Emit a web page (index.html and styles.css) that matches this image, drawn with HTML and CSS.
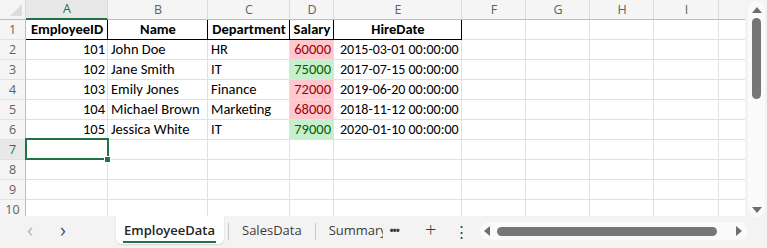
FILE: index.html
```html
<!DOCTYPE html>
<html lang="en">
<head>
  <meta charset="UTF-8" />
  <meta name="viewport" content="width=device-width, initial-scale=1.0" />
  <title>EmployeeData</title>
  <link rel="stylesheet" href="styles.css">
</head>
<body>

  <!-- Sheet area with grid and vertical scrollbar -->
  <div class="workbook">
    <div class="sheet-row">
      <div class="sheet">
        <table class="grid">
          <colgroup>
            <col style="width:26px">
            <col style="width:82px">
            <col style="width:100px">
            <col style="width:82px">
            <col style="width:44px">
            <col style="width:128px">
            <col style="width:64px">
            <col style="width:64px">
            <col style="width:64px">
            <col style="width:65px">
            <col style="width:27px">
          </colgroup>
          <tr class="col-heads">
            <th class="corner"><span class="corner-tri"></span></th>
            <th class="sel-col">A</th>
            <th>B</th>
            <th>C</th>
            <th>D</th>
            <th>E</th>
            <th>F</th>
            <th>G</th>
            <th>H</th>
            <th>I</th>
            <th></th>
          </tr>
          <tr class="head-row">
            <th class="row-head">1</th>
            <td class="hd">EmployeeID</td>
            <td class="hd">Name</td>
            <td class="hd">Department</td>
            <td class="hd">Salary</td>
            <td class="hd">HireDate</td>
            <td></td><td></td><td></td><td></td><td></td>
          </tr>
          <tr>
            <th class="row-head">2</th>
            <td class="num">101</td>
            <td>John Doe</td>
            <td>HR</td>
            <td class="num bad">60000</td>
            <td class="date">2015-03-01 00:00:00</td>
            <td></td><td></td><td></td><td></td><td></td>
          </tr>
          <tr>
            <th class="row-head">3</th>
            <td class="num">102</td>
            <td>Jane Smith</td>
            <td>IT</td>
            <td class="num good">75000</td>
            <td class="date">2017-07-15 00:00:00</td>
            <td></td><td></td><td></td><td></td><td></td>
          </tr>
          <tr>
            <th class="row-head">4</th>
            <td class="num">103</td>
            <td>Emily Jones</td>
            <td>Finance</td>
            <td class="num bad">72000</td>
            <td class="date">2019-06-20 00:00:00</td>
            <td></td><td></td><td></td><td></td><td></td>
          </tr>
          <tr>
            <th class="row-head">5</th>
            <td class="num">104</td>
            <td>Michael Brown</td>
            <td>Marketing</td>
            <td class="num bad">68000</td>
            <td class="date">2018-11-12 00:00:00</td>
            <td></td><td></td><td></td><td></td><td></td>
          </tr>
          <tr>
            <th class="row-head">6</th>
            <td class="num">105</td>
            <td>Jessica White</td>
            <td>IT</td>
            <td class="num good">79000</td>
            <td class="date">2020-01-10 00:00:00</td>
            <td></td><td></td><td></td><td></td><td></td>
          </tr>
          <tr>
            <th class="row-head sel-row">7</th>
            <td class="active"><span class="sel-box"></span><span class="sel-handle"></span></td>
            <td></td><td></td><td></td><td></td><td></td><td></td><td></td><td></td><td></td>
          </tr>
          <tr>
            <th class="row-head">8</th>
            <td></td><td></td><td></td><td></td><td></td><td></td><td></td><td></td><td></td><td></td>
          </tr>
          <tr>
            <th class="row-head">9</th>
            <td></td><td></td><td></td><td></td><td></td><td></td><td></td><td></td><td></td><td></td>
          </tr>
          <tr>
            <th class="row-head">10</th>
            <td></td><td></td><td></td><td></td><td></td><td></td><td></td><td></td><td></td><td></td>
          </tr>
        </table>
      </div>

      <!-- Vertical scrollbar -->
      <div class="vscroll">
        <div class="vtrack">
          <span class="tri tri-up"></span>
          <span class="vthumb"></span>
          <span class="vspace"></span>
          <span class="tri tri-down"></span>
        </div>
      </div>
    </div>

    <!-- Sheet tabs and horizontal scrollbar -->
    <div class="tabbar">
      <div class="tab-nav">
        <span class="nav-arrow off">&lsaquo;</span>
        <span class="nav-arrow">&rsaquo;</span>
      </div>
      <div class="tab active"><span class="tab-label">EmployeeData</span></div>
      <span class="tab-sep"></span>
      <div class="tab">SalesData</div>
      <span class="tab-sep"></span>
      <div class="tab clipped">Summary</div>
      <span class="tab-more">&bull;&bull;&bull;</span>
      <span class="tab-add">+</span>
      <span class="tab-menu">&#8942;</span>
      <div class="hscroll">
        <span class="tri tri-left"></span>
        <span class="hthumb"></span>
        <span class="tri tri-right"></span>
      </div>
    </div>
  </div>

</body>
</html>
```

FILE: styles.css
```css
/* Page base */
body {
  margin: 0;
  background-color: #f3f3f3;
  font-family: "Carlito", "Liberation Sans", Arial, sans-serif;
}

.workbook {
  width: 767px;
  height: 248px;
  overflow: hidden;
}

/* Grid row: sheet plus vertical scrollbar */
.sheet-row {
  display: flex;
  height: 216px;
}

.sheet {
  width: 745px;
  height: 216px;
  overflow: hidden;
  background-color: #ffffff;
}

/* Spreadsheet table */
.grid {
  border-collapse: separate;
  border-spacing: 0;
  table-layout: fixed;
  width: 746px;
  font-size: 14.5px;
  color: #000000;
}

.grid td,
.grid th {
  box-sizing: border-box;
  height: 20px;
  padding: 0 2px 0 3px;
  border-right: 1px solid #e1e1e1;
  border-bottom: 1px solid #e1e1e1;
  white-space: nowrap;
  overflow: hidden;
  line-height: 19px;
}

.grid td.date {
  font-size: 14px;
  padding-left: 6px;
  padding-right: 0;
}

/* Column letters */
.col-heads th {
  background-color: #f5f5f5;
  color: #5f5f5f;
  font-family: "Open Sans", "Noto Sans", sans-serif;
  font-weight: normal;
  font-size: 12.5px;
  border-right-color: #dadada;
  border-bottom-color: #bdbdbd;
  text-align: center;
}

.col-heads th.sel-col {
  color: #217346;
  background-color: #e8e8e8;
  border-bottom: 2px solid #217346;
  line-height: 18px;
}

.corner {
  position: relative;
}

.corner-tri {
  position: absolute;
  right: 3px;
  bottom: 3px;
  width: 0;
  height: 0;
  border-left: 12px solid transparent;
  border-bottom: 12px solid #dcdcdc;
}

/* Row numbers */
.row-head {
  background-color: #f5f5f5;
  color: #5f5f5f;
  font-family: "Open Sans", "Noto Sans", sans-serif;
  font-weight: normal;
  font-size: 12.5px;
  text-align: center;
  border-right-color: #bdbdbd !important;
}

.grid th.row-head {
  padding: 0;
}

.row-head.sel-row {
  color: #217346;
  background-color: #e8e8e8;
}

/* Header row of the data */
.head-row td.hd {
  font-weight: bold;
  text-align: center;
  border-right: 1px solid #000000;
  border-bottom: 1px solid #000000;
}

.num {
  text-align: right;
}

/* Conditional formatting fills */
.bad {
  background-color: #ffc7ce;
  color: #9c0006;
}

.good {
  background-color: #c6efce;
  color: #006100;
}

/* Active cell A7 */
.grid td.active {
  position: relative;
  overflow: visible;
}

.sel-box {
  position: absolute;
  top: -2px;
  left: -1px;
  right: -2px;
  bottom: -1px;
  border: 2px solid #217346;
}

.sel-handle {
  position: absolute;
  right: -4px;
  bottom: -4px;
  width: 5px;
  height: 5px;
  background-color: #217346;
  border: 1px solid #ffffff;
}

/* Vertical scrollbar */
.vscroll {
  width: 22px;
  padding: 1px 2px 0 3px;
  box-sizing: border-box;
}

.vtrack {
  height: 216px;
  background-color: #fafafa;
  border-radius: 8px;
  display: flex;
  flex-direction: column;
  align-items: center;
  padding: 6px 0 4px;
  box-sizing: border-box;
}

.vthumb {
  margin-top: 5px;
  width: 9px;
  height: 81px;
  background-color: #767676;
  border-radius: 5px;
}

.vspace {
  flex: 1;
}

/* Little scroll arrows */
.tri {
  width: 0;
  height: 0;
}

.tri-up {
  border-left: 5px solid transparent;
  border-right: 5px solid transparent;
  border-bottom: 6px solid #6e6e6e;
}

.tri-down {
  border-left: 5px solid transparent;
  border-right: 5px solid transparent;
  border-top: 6px solid #6e6e6e;
}

.tri-left {
  border-top: 5px solid transparent;
  border-bottom: 5px solid transparent;
  border-right: 6px solid #6e6e6e;
}

.tri-right {
  border-top: 5px solid transparent;
  border-bottom: 5px solid transparent;
  border-left: 6px solid #6e6e6e;
}

/* Sheet tab bar */
.tabbar {
  display: flex;
  align-items: flex-start;
  height: 32px;
  font-family: "Open Sans", "Noto Sans", sans-serif;
  font-size: 13px;
  color: #3b3b3b;
}

.tab-nav {
  width: 116px;
  display: flex;
  padding-left: 27px;
  box-sizing: border-box;
}

.nav-arrow {
  width: 33px;
  font-size: 20px;
  line-height: 28px;
  color: #555555;
}

.nav-arrow.off {
  color: #b5b5b5;
}

.tab {
  height: 28px;
  line-height: 28px;
  padding: 0 9px 0 11px;
  white-space: nowrap;
}

.tab.active {
  width: 108px;
  box-sizing: border-box;
  padding: 0 7px;
  background-color: #ffffff;
  border-radius: 0 0 6px 6px;
  box-shadow: 0 1px 2px rgba(0, 0, 0, 0.12);
  font-weight: 600;
  color: #242424;
}

.tab-label {
  display: inline-block;
  line-height: 22px;
  border-bottom: 2px solid #217346;
  padding: 0 1px;
}

.tab-sep {
  width: 1px;
  height: 17px;
  margin: 7px 2px 0 4px;
  background-color: #c8c8c8;
}

.tab.clipped {
  width: 65px;
  box-sizing: border-box;
  overflow: hidden;
  padding: 0 0 0 11px;
}

.tab-more {
  width: 23px;
  text-align: center;
  font-size: 11px;
  font-weight: bold;
  line-height: 28px;
  color: #3b3b3b;
  letter-spacing: -1px;
}

.tab-add {
  width: 30px;
  margin-left: 10px;
  text-align: center;
  font-size: 20px;
  font-weight: 300;
  line-height: 28px;
  color: #3b3b3b;
}

.tab-menu {
  width: 32px;
  text-align: center;
  font-size: 15px;
  line-height: 30px;
  color: #3b3b3b;
}

/* Horizontal scrollbar */
.hscroll {
  margin: 6px 0 0 2px;
  width: 268px;
  height: 18px;
  background-color: #fafafa;
  border-radius: 9px;
  display: flex;
  align-items: center;
  padding: 0 0 0 4px;
  box-sizing: border-box;
}

.hthumb {
  width: 220px;
  height: 9px;
  margin: 0 19px 0 7px;
  background-color: #767676;
  border-radius: 5px;
}
```
